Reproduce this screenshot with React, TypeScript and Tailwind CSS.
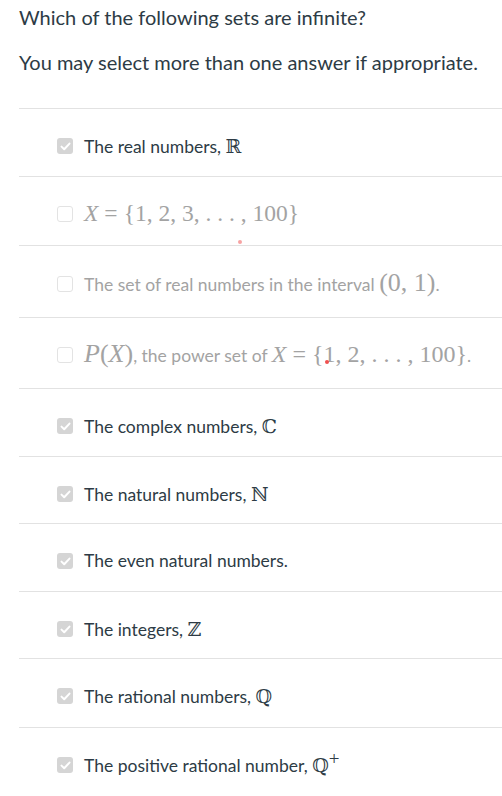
import React from "react";

const lato = { fontFamily: "Lato, 'Noto Sans', sans-serif" } as React.CSSProperties;

function Check({ checked }: { checked: boolean }) {
  if (checked) {
    return (
      <span className="flex h-[16px] w-[16px] shrink-0 items-center justify-center rounded-[3px] bg-[#d5d5d5]">
        <svg width="11" height="9" viewBox="0 0 11 9">
          <path d="M1.5 4.6 L4.2 7.2 L9.5 1.6" stroke="#fff" strokeWidth="2" fill="none" strokeLinecap="round" strokeLinejoin="round" />
        </svg>
      </span>
    );
  }
  return <span className="h-[16px] w-[16px] shrink-0 rounded-[3px] border border-[#e3e3e3] bg-white" />;
}

const M = ({ children, cls = "" }: { children: React.ReactNode; cls?: string }) => (
  <span className={"font-['Liberation_Serif',serif] " + cls}>{children}</span>
);
const I = ({ children }: { children: React.ReactNode }) => <span className="italic">{children}</span>;
const Eq = () => <span className="mx-[6px]">=</span>;
const BB = ({ children }: { children: React.ReactNode }) => (
  <span className="font-['DejaVu_Serif',serif] text-[19px]">{children}</span>
);

type Row = { checked: boolean; content: React.ReactNode; pt: string; pb: string };

const rows: Row[] = [
  { checked: true, pt: "pt-[25px]", pb: "pb-[18px]", content: <>The real numbers, <BB>ℝ</BB></> },
  {
    checked: false,
    pt: "pt-[25px]",
    pb: "pb-[19px]",
    content: (
      <span className="relative">
        <M cls="text-[23.5px]"><I>X</I><Eq />{"{"}1, 2, 3, . . . , 100{"}"}</M>
        <span className="absolute left-[154px] top-[36px] h-[4px] w-[4px] rounded-full bg-[#f7a3a3]" />
      </span>
    ),
  },
  {
    checked: false,
    pt: "pt-[26px]",
    pb: "pb-[21px]",
    content: (
      <>The set of real numbers in the interval <M cls="text-[26px]">(0, 1)</M>.</>
    ),
  },
  {
    checked: false,
    pt: "pt-[25px]",
    pb: "pb-[21px]",
    content: (
      <>
        <M cls="text-[26px]"><I>P</I>(<I>X</I>)</M>, the power set of{" "}
        <span className="relative">
          <M cls="text-[24px]"><I>X</I><Eq />{"{"}1, 2, . . . , 100{"}"}</M>
          <span className="absolute left-[53px] top-[15px] h-[4px] w-[4px] rounded-full bg-[#f05050]" />
        </span>.
      </>
    ),
  },
  { checked: true, pt: "pt-[25px]", pb: "pb-[18px]", content: <>The complex numbers, <BB>ℂ</BB></> },
  { checked: true, pt: "pt-[25px]", pb: "pb-[17px]", content: <>The natural numbers, <BB>ℕ</BB></> },
  { checked: true, pt: "pt-[25px]", pb: "pb-[18px]", content: <>The even natural numbers.</> },
  { checked: true, pt: "pt-[25px]", pb: "pb-[17px]", content: <>The integers, <BB>ℤ</BB></> },
  { checked: true, pt: "pt-[25px]", pb: "pb-[19px]", content: <>The rational numbers, <BB>ℚ</BB></> },
  {
    checked: true,
    pt: "pt-[25px]",
    pb: "pb-[18px]",
    content: (
      <>The positive rational number, <BB>ℚ</BB><span className="relative top-[-7px] font-['Liberation_Serif',serif] text-[19px]">+</span></>
    ),
  },
];

export default function App() {
  return (
    <div className="min-h-[796px] bg-white pl-[19px] text-[#2d3b45]" style={lato}>
      <p className="pt-[5px] text-[20px] leading-[24px]">Which of the following sets are infinite?</p>
      <p className="mt-[21px] text-[20px] leading-[24px]">You may select more than one answer if appropriate.</p>
      <div className="mt-[34px]">
        {rows.map((r, i) => (
          <div key={i} className={"border-t border-[#e2e2e2] " + r.pt + " " + r.pb}>
            <div
              className={
                "flex h-[24px] items-center gap-[11px] pl-[38px] text-[17.5px] leading-[24px] " +
                (r.checked ? "text-[#2d3b45]" : "text-[#a3a3a3]")
              }
            >
              <Check checked={r.checked} />
              <span className="whitespace-nowrap">{r.content}</span>
            </div>
          </div>
        ))}
      </div>
    </div>
  );
}
